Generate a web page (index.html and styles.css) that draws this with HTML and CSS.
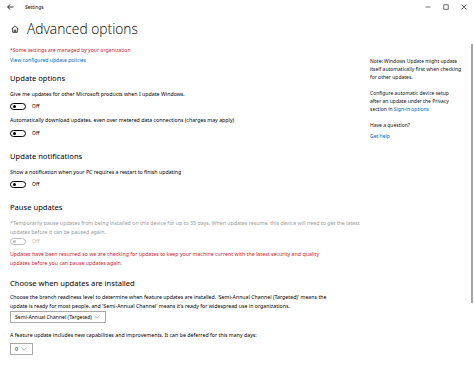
FILE: index.html
```html
<!DOCTYPE html>
<html>
<head>
<meta charset="utf-8">
<link rel="stylesheet" href="styles.css">
</head>
<body>
<div class="titlebar">
  <div class="tb-left">
    <svg class="back" width="7" height="6" viewBox="0 0 7 6"><path d="M3 0.5 L0.7 3 L3 5.5 M0.7 3 H6.5" fill="none" stroke="#000" stroke-width="0.8"/></svg>
    <span class="tb-title">Settings</span>
  </div>
  <div class="tb-controls">
    <svg width="6" height="6" viewBox="0 0 6 6"><path d="M0.5 3 H5.5" stroke="#333" stroke-width="0.7"/></svg>
    <svg width="6" height="6" viewBox="0 0 6 6"><rect x="0.8" y="0.8" width="4.4" height="4.4" fill="none" stroke="#333" stroke-width="0.7"/></svg>
    <svg width="6" height="6" viewBox="0 0 6 6"><path d="M0.6 0.6 L5.4 5.4 M5.4 0.6 L0.6 5.4" stroke="#333" stroke-width="0.7"/></svg>
  </div>
</div>
<div class="content">
  <div class="main">
    <div class="header">
      <svg class="home" width="8" height="8" viewBox="0 0 8 8"><path d="M0.6 4 L4 0.8 L7.4 4 M1.6 3.1 V7.3 H6.4 V3.1 M3.3 7.3 V5 H4.7 V7.3" fill="none" stroke="#000" stroke-width="0.7"/></svg>
      <h1>Advanced options</h1>
    </div>
    <p class="warn managed">*Some settings are managed by your organization</p>
    <p class="link policies">View configured update policies</p>

    <h2 class="h-first">Update options</h2>
    <p class="txt">Give me updates for other Microsoft products when I update Windows.</p>
    <div class="toggle-row"><span class="toggle"><span class="knob"></span></span><span class="state">Off</span></div>
    <p class="txt next">Automatically download updates, even over metered data connections (charges may apply)</p>
    <div class="toggle-row second"><span class="toggle"><span class="knob"></span></span><span class="state">Off</span></div>

    <h2>Update notifications</h2>
    <p class="txt">Show a notification when your PC requires a restart to finish updating</p>
    <div class="toggle-row"><span class="toggle"><span class="knob"></span></span><span class="state">Off</span></div>

    <h2>Pause updates</h2>
    <p class="txt disabled">*Temporarily pause updates from being installed on this device for up to 35 days. When updates resume, this device will need to get the latest updates before it can be paused again.</p>
    <div class="toggle-row tight dis"><span class="toggle"><span class="knob"></span></span><span class="state">Off</span></div>
    <p class="txt warn resumed">Updates have been resumed so we are checking for updates to keep your machine current with the latest security and quality updates before you can pause updates again.</p>

    <h2 class="h-choose">Choose when updates are installed</h2>
    <p class="txt branch">Choose the branch readiness level to determine when feature updates are installed. 'Semi-Annual Channel (Targeted)' means the update is ready for most people, and 'Semi-Annual Channel' means it's ready for widespread use in organizations.</p>
    <div class="select wide"><span>Semi-Annual Channel (Targeted)</span><svg width="6" height="4" viewBox="0 0 6 4"><path d="M0.5 0.8 L3 3.2 L5.5 0.8" fill="none" stroke="#777" stroke-width="0.6"/></svg></div>
    <p class="txt defer">A feature update includes new capabilities and improvements. It can be deferred for this many days:</p>
    <div class="select small"><span>0</span><svg width="6" height="4" viewBox="0 0 6 4"><path d="M0.5 0.8 L3 3.2 L5.5 0.8" fill="none" stroke="#777" stroke-width="0.6"/></svg></div>
  </div>
  <div class="aside">
    <p>Note: Windows Update might update<br>itself automatically first when checking<br>for other updates.</p>
    <p class="gap">Configure automatic device setup<br>after an update under the Privacy<br>section in <span class="blue">Sign-in options</span></p>
    <p class="gap">Have a question?</p>
    <p class="blue help">Get help</p>
  </div>
</div>
<div class="scrollbar"></div>
</body>
</html>
```

FILE: styles.css
```css
* { box-sizing: border-box; }
html, body { margin: 0; padding: 0; }
body {
  width: 474px;
  height: 368px;
  overflow: hidden;
  background: #fff;
  font-family: "Noto Sans", "Open Sans", sans-serif;
  color: #000;
  position: relative;
}
p, h1, h2 { margin: 0; font-weight: normal; }

.titlebar {
  height: 13px;
  display: flex;
  justify-content: space-between;
  align-items: center;
}
.tb-left { display: flex; align-items: center; padding-left: 7px; gap: 11px; }
.back { display: block; }
.tb-title { font-size: 4.9px; line-height: 6px; }
.tb-controls { display: flex; gap: 12px; padding-right: 7px; align-items: center; }
.tb-controls svg { display: block; }

.content { display: flex; }
.main { width: 360px; padding-left: 10px; }
.aside { width: 106px; padding-left: 10px; padding-top: 43.5px; font-size: 5px; line-height: 8.3px; color: #111; white-space: nowrap; }
.aside .gap { margin-top: 7.5px; }
.aside .help { margin-top: 2.5px; }
.blue { color: #0067b8; }

.header { display: flex; align-items: center; gap: 8px; margin-top: 7px; height: 18px; padding-left: 1px; }
.home { display: block; }
h1 {
  font-family: "Open Sans", "Noto Sans", sans-serif;
  font-weight: 300;
  font-size: 13.8px;
  line-height: 18px;
}

.managed, .policies { font-size: 5.1px; line-height: 10px; }
.managed { margin-top: 7px; }
.warn { color: #c9242b; }
.link { color: #0067b8; }

h2 {
  font-size: 7.6px;
  line-height: 12px;
  margin-top: 13.5px;
}
h2.h-first { margin-top: 7px; }
h2.h-choose { margin-top: 8.5px; }

.txt { font-size: 5.25px; line-height: 9px; margin-top: 6px; width: 350px; }
.txt.next { margin-top: 6.5px; }
.disabled { color: #9a9a9a; }
.resumed { margin-top: 5px; width: 318px; }
.branch { margin-top: 4px; width: 326px; }

.toggle-row { display: flex; align-items: center; gap: 6px; margin-top: 3.5px; height: 7px; }
.toggle-row.second { margin-top: 4.5px; }
.toggle-row.tight { margin-top: 1px; }
.toggle {
  width: 16px; height: 7px;
  border: 1px solid #000;
  border-radius: 4px;
  display: flex; align-items: center;
  padding-left: 2px;
}
.knob { width: 3px; height: 3px; border-radius: 50%; background: #000; }
.state { font-size: 5px; line-height: 7px; }
.dis .toggle { border-color: #bdbdbd; }
.dis .knob { background: #bdbdbd; }
.dis .state { color: #bdbdbd; }

.select {
  margin-top: 0;
  height: 12px;
  border: 1px solid #a8a8a8;
  display: flex; align-items: center; justify-content: space-between;
  padding: 0 5px 0 4px;
  font-size: 5.1px;
}
.select svg { display: block; }
.select.wide { width: 96px; }
.select.small { width: 23px; margin-top: 3.5px; }
.defer { margin-top: 8px; }

.scrollbar {
  position: absolute;
  right: 1px;
  top: 44px;
  width: 2px;
  height: 259px;
  background: #a6a6a6;
}
```
